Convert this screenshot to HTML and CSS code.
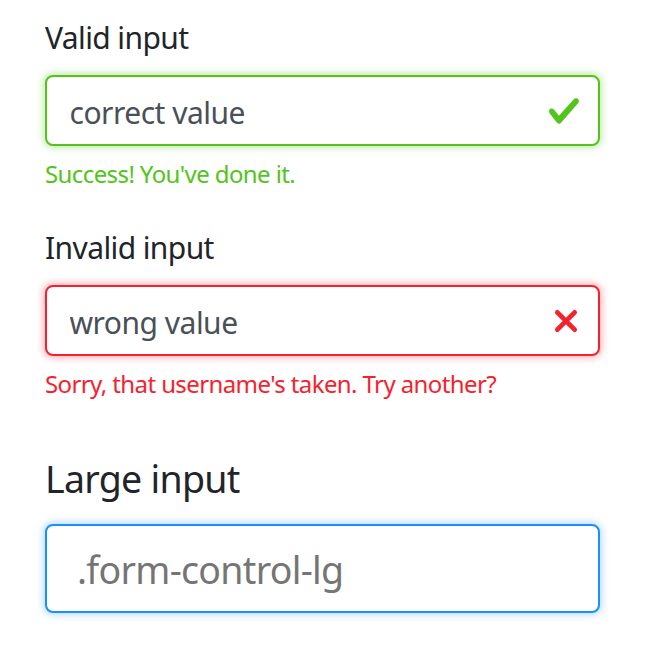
FILE: index.html
```html
<!DOCTYPE html>
<html lang="en">
<head>
<meta charset="utf-8">
<title>Form validation</title>
<link rel="stylesheet" href="styles.css">
</head>
<body>
<form class="form">
  <div class="group">
    <label class="label" for="v">Valid input</label>
    <div class="control is-valid">
      <input id="v" class="input" type="text" value="correct value">
      <svg class="state-icon check" viewBox="0 0 8 8" aria-hidden="true"><path d="M2.3 6.73L.6 4.53c-.4-1.04.46-1.4 1.1-.8l1.1 1.4 3.4-3.8c.6-.63 1.6-.27 1.2.7l-4 4.6c-.43.5-.8.4-1.1.1z"/></svg>
    </div>
    <div class="feedback valid">Success! You've done it.</div>
  </div>
  <div class="group">
    <label class="label" for="i">Invalid input</label>
    <div class="control is-invalid">
      <input id="i" class="input" type="text" value="wrong value">
      <svg class="state-icon cross" viewBox="0 0 24 24" aria-hidden="true"><path d="M4 4L20 20M20 4L4 20"/></svg>
    </div>
    <div class="feedback invalid">Sorry, that username's taken. Try another?</div>
  </div>
  <div class="group large">
    <label class="label label-lg" for="l">Large input</label>
    <div class="control is-focus">
      <input id="l" class="input input-lg" type="text" placeholder=".form-control-lg">
    </div>
  </div>
</form>
</body>
</html>
```
FILE: styles.css
```css
html, body {
  margin: 0;
  padding: 0;
  background: #fff;
}
body {
  font-family: "Noto Sans", "Open Sans", sans-serif;
  color: #212529;
}
.form {
  width: 555px;
  padding: 15px 0 0 45px;
}
.group {
  margin-bottom: 33.5px;
}
.large {
  padding-top: 16px;
}
.label {
  display: block;
  font-size: 30px;
  line-height: 45px;
  letter-spacing: -0.6px;
  margin-bottom: 15px;
}
.label-lg {
  font-size: 37.5px;
  line-height: 56px;
  letter-spacing: -0.7px;
  margin-bottom: 16.5px;
}
.control {
  position: relative;
  border-radius: 8px;
}
.input {
  display: block;
  box-sizing: border-box;
  width: 100%;
  height: 71px;
  margin: 0;
  padding: 13px 62px 9px 22.5px;
  font-family: inherit;
  font-size: 30px;
  line-height: 45px;
  letter-spacing: -0.5px;
  color: #495057;
  background: #fff;
  border: 2px solid #ced4da;
  border-radius: 8px;
  outline: none;
}
.input-lg {
  height: 89px;
  padding: 16px 30px 13px;
  font-size: 37.5px;
  line-height: 56px;
  letter-spacing: -0.7px;
}
.input-lg::placeholder {
  color: #757575;
  opacity: 1;
}
.is-valid .input {
  border-color: #52c41a;
  box-shadow: 0 0 7px 2px rgba(82, 196, 26, 0.35);
}
.is-invalid .input {
  border-color: #f5222d;
  box-shadow: 0 0 7px 2px rgba(245, 34, 45, 0.35);
}
.is-focus .input {
  border-color: #1890ff;
  box-shadow: 0 0 7px 2px rgba(24, 144, 255, 0.3);
}
.state-icon {
  position: absolute;
  top: 50%;
  transform: translateY(-50%);
}
.check {
  right: 19px;
  width: 34px;
  height: 34px;
  fill: #52c41a;
}
.cross {
  right: 21px;
  width: 26px;
  height: 26px;
  fill: none;
  stroke: #f5222d;
  stroke-width: 4.4;
  stroke-linecap: round;
}
.feedback {
  margin-top: 9.5px;
  font-size: 24px;
  line-height: 36px;
  letter-spacing: -0.6px;
}
.valid {
  color: #52c41a;
}
.invalid {
  color: #f5222d;
}
```
